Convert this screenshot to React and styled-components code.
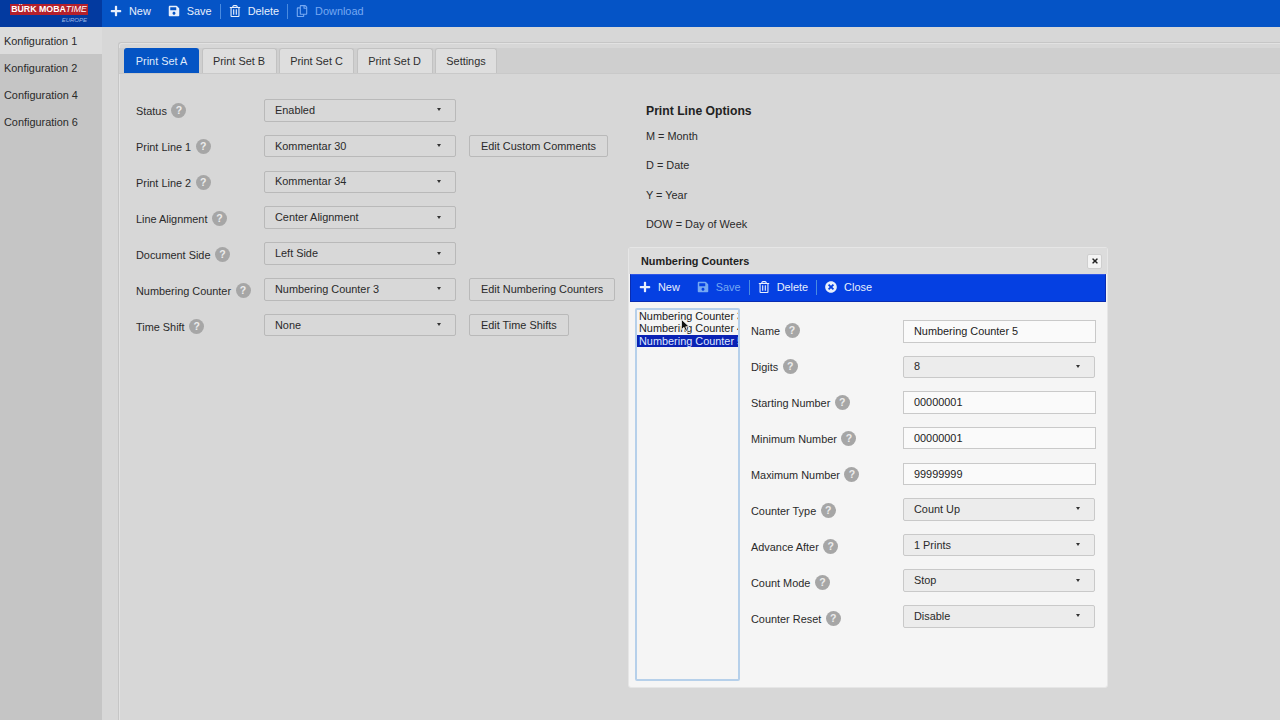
import React from 'react';
import styled, { createGlobalStyle } from 'styled-components';
import { FaPlus, FaSave, FaRegTrashAlt, FaRegCopy, FaTimesCircle, FaTimes } from 'react-icons/fa';

const GlobalStyle = createGlobalStyle`
  html, body { margin: 0; padding: 0; height: 100%; overflow: hidden; }
  body { background: #d7d7d7; font-family: "Liberation Sans", Arial, sans-serif; font-size: 10.9px; color: #2a2a2a; }
`;

const Page = styled.div`
  position: relative;
  width: 1280px;
  height: 720px;
  display: flex;
  flex-direction: column;
  overflow: hidden;
`;

const TopBar = styled.header`
  height: 27px;
  flex: none;
  display: flex;
  background: #0554c6;
`;

const Logo = styled.div`
  width: 102px;
  display: flex;
  flex-direction: column;
  padding: 4px 0 0 10px;
  box-sizing: border-box;
  background: #033aa0;
`;

const LogoMark = styled.div`
  width: 78px;
  height: 11px;
  line-height: 11px;
  background: #b4202c;
  color: #fff;
  font-size: 8.8px;
  font-weight: bold;
  text-align: center;
  white-space: nowrap;
  span { font-weight: normal; font-style: italic; }
`;

const LogoSub = styled.div`
  width: 77px;
  margin-top: 1px;
  text-align: right;
  color: #9db8e6;
  font-size: 6px;
  font-style: italic;
  line-height: 9px;
`;

const Toolbar = styled.div`
  display: flex;
  align-items: center;
  height: 22px;
  padding-left: 8px;
`;

const ModalToolbar = styled(Toolbar)`
  height: 28px;
  flex: none;
  box-sizing: border-box;
  padding-bottom: 2px;
  border: 1px solid #0a2cb0;
  border-top-color: #2f55e6;
  background: #0540e2;
`;

const ToolButton = styled.div`
  display: flex;
  align-items: center;
  gap: 7px;
  margin-right: ${p => p.$gap}px;
  color: ${p => (p.$off ? '#75a8f2' : '#e8effc')};
  white-space: nowrap;
  svg { width: 12px; height: 12px; flex: none; }
`;

const ToolSep = styled.div`
  width: 1px;
  height: 15px;
  margin-right: 8px;
  background: #4a8be0;
`;

const Main = styled.div`
  flex: 1;
  display: flex;
  min-height: 0;
`;

const Sidebar = styled.nav`
  width: 102px;
  flex: none;
  background: #c5c5c5;
`;

const SideItem = styled.div`
  height: 27px;
  line-height: 28px;
  padding-left: 4px;
  background: ${p => (p.$active ? '#dcdcdc' : 'transparent')};
`;

const Content = styled.main`
  flex: 1;
  padding: 15px 0 0 16px;
`;

const Panel = styled.section`
  height: 100%;
  box-sizing: border-box;
  border: 1px solid #c6c6c6;
  border-right: none;
  border-bottom: none;
  border-radius: 3px 0 0 0;
  box-shadow: inset 1px 1px 0 #e2e2e2;
`;

const TabStrip = styled.div`
  display: flex;
  gap: 2.5px;
  height: 26px;
  box-sizing: border-box;
  margin-top: 5px;
  padding: 0 5px;
  background: #cfcfcf;
  border-bottom: 1px solid #c9c9c9;
`;

const Tab = styled.div`
  width: ${p => p.$w}px;
  text-align: center;
  line-height: 25px;
  box-sizing: border-box;
  border: 1px solid ${p => (p.$active ? '#0454c4' : '#c2c2c2')};
  border-bottom: none;
  border-radius: 3px 3px 0 0;
  background: ${p => (p.$active ? '#0454c4' : '#dedede')};
  color: ${p => (p.$active ? '#dfe9fb' : '#2e2e2e')};
`;

const PanelBody = styled.div`
  display: flex;
  padding: 25px 0 0 17px;
`;

const FormColumns = styled.div`
  display: flex;
  flex: ${p => (p.$fill ? 1 : 'none')};
  width: ${p => (p.$fill ? 'auto' : '510px')};
`;

const LabelColumn = styled.div`
  width: ${p => p.$w}px;
  flex: none;
  display: flex;
  flex-direction: column;
  gap: 14px;
  padding-top: ${p => p.$top}px;
`;

const ControlColumn = styled.div`
  display: flex;
  flex-direction: column;
  gap: ${p => p.$gap}px;
`;

const ControlRow = styled.div`
  display: flex;
`;

const Label = styled.div`
  height: 22px;
  display: flex;
  align-items: center;
  gap: 4.5px;
  white-space: nowrap;
`;

const Help = styled.span`
  width: 15px;
  height: 15px;
  margin-top: -1px;
  border-radius: 50%;
  background: #a6a6a6;
  color: #ececec;
  font-size: 10.5px;
  font-weight: bold;
  line-height: 15px;
  text-align: center;
`;

const Select = styled.div`
  width: 192px;
  height: 22.5px;
  flex: none;
  box-sizing: border-box;
  display: flex;
  align-items: center;
  justify-content: space-between;
  padding: 0 14px 1px 10px;
  border: 1px solid ${p => (p.$light ? '#c9c9c9' : '#b9b9b9')};
  border-radius: 2px;
  background: ${p => (p.$light ? '#ececec' : '#d8d8d8')};
  &::after {
    content: '';
    border-left: 2.5px solid transparent;
    border-right: 2.5px solid transparent;
    border-top: 3px solid #333;
  }
`;

const EditButton = styled.div`
  height: 22.5px;
  margin-left: 13px;
  padding: 0 11px;
  box-sizing: border-box;
  line-height: 20px;
  white-space: nowrap;
  border: 1px solid #b9b9b9;
  border-radius: 2px;
  background: #d8d8d8;
`;

const Options = styled.aside`
  padding: 4px 0 0 0;
`;

const OptionsTitle = styled.h3`
  margin: 0 0 10px;
  font-size: 12.2px;
  line-height: 16px;
  color: #222;
`;

const OptionLine = styled.p`
  margin: 0 0 15.4px;
  line-height: 14px;
`;

const Modal = styled.div`
  position: absolute;
  left: 628px;
  top: 247px;
  width: 480px;
  height: 441px;
  box-sizing: border-box;
  padding: 0 1px;
  display: flex;
  flex-direction: column;
  background: #f5f5f5;
  border: 1px solid #e6e6e6;
  border-radius: 3px;
`;

const ModalTitle = styled.div`
  height: 26px;
  flex: none;
  display: flex;
  align-items: center;
  justify-content: space-between;
  margin: 0 -1px;
  padding: 0 5px 0 12px;
  background: #dcdcdc;
  font-weight: bold;
  color: #222;
`;

const CloseBox = styled.div`
  width: 13px;
  height: 13px;
  display: flex;
  align-items: center;
  justify-content: center;
  border: 1px solid #cfcfcf;
  border-radius: 2px;
  background: #f4f4f4;
  color: #222;
  svg { width: 8px; height: 8px; }
`;

const ModalBody = styled.div`
  flex: 1;
  display: flex;
  min-height: 0;
  padding: 6px 0 6px 5px;
`;

const CounterList = styled.div`
  width: 105px;
  flex: none;
  box-sizing: border-box;
  border: 2px solid #b6d0ea;
  border-radius: 2px;
  overflow: hidden;
`;

const CounterItem = styled.div`
  height: 12.3px;
  line-height: 12px;
  white-space: nowrap;
  overflow: hidden;
  padding-left: 2px;
  color: ${p => (p.$active ? '#dfe6ff' : '#222')};
  background: ${p => (p.$active ? '#0a22b4' : 'transparent')};
`;

const CounterForm = styled(FormColumns)`
  padding: 12px 0 0 11px;
`;

const TextField = styled.div`
  width: 193px;
  height: 22.5px;
  flex: none;
  box-sizing: border-box;
  line-height: 20px;
  padding-left: 10px;
  border: 1px solid #c9c9c9;
  background: #fafafa;
  color: #222;
`;

const Cursor = styled.svg`
  position: absolute;
  left: 681px;
  top: 319px;
  width: 9px;
  height: 13px;
`;

const settingsRows = [
  ['Status', 'Enabled'],
  ['Print Line 1', 'Kommentar 30', 'Edit Custom Comments'],
  ['Print Line 2', 'Kommentar 34'],
  ['Line Alignment', 'Center Alignment'],
  ['Document Side', 'Left Side'],
  ['Numbering Counter', 'Numbering Counter 3', 'Edit Numbering Counters'],
  ['Time Shift', 'None', 'Edit Time Shifts'],
];

const counterRows = [
  ['Name', 'Numbering Counter 5', 'text'],
  ['Digits', '8'],
  ['Starting Number', '00000001', 'text'],
  ['Minimum Number', '00000001', 'text'],
  ['Maximum Number', '99999999', 'text'],
  ['Counter Type', 'Count Up'],
  ['Advance After', '1 Prints'],
  ['Count Mode', 'Stop'],
  ['Counter Reset', 'Disable'],
];

const tabs = [['Print Set A', 75], ['Print Set B', 75], ['Print Set C', 75], ['Print Set D', 76], ['Settings', 62]];

export default function App() {
  return (
    <Page>
      <GlobalStyle />
      <TopBar>
        <Logo>
          <LogoMark>BÜRK MOBA<span>TIME</span></LogoMark>
          <LogoSub>EUROPE</LogoSub>
        </Logo>
        <Toolbar>
          <ToolButton $gap={17}><FaPlus />New</ToolButton>
          <ToolButton $gap={8}><FaSave />Save</ToolButton>
          <ToolSep />
          <ToolButton $gap={8}><FaRegTrashAlt />Delete</ToolButton>
          <ToolSep />
          <ToolButton $off $gap={0}><FaRegCopy />Download</ToolButton>
        </Toolbar>
      </TopBar>
      <Main>
        <Sidebar>
          <SideItem $active>Konfiguration 1</SideItem>
          <SideItem>Konfiguration 2</SideItem>
          <SideItem>Configuration 4</SideItem>
          <SideItem>Configuration 6</SideItem>
        </Sidebar>
        <Content>
          <Panel>
            <TabStrip>
              {tabs.map(([name, w], i) => <Tab key={name} $w={w} $active={i === 0}>{name}</Tab>)}
            </TabStrip>
            <PanelBody>
              <FormColumns>
                <LabelColumn $w={128} $top={1}>
                  {settingsRows.map(([label]) => <Label key={label}>{label}<Help>?</Help></Label>)}
                </LabelColumn>
                <ControlColumn $gap={13.33}>
                  {settingsRows.map(([label, value, action]) => (
                    <ControlRow key={label}>
                      <Select>{value}</Select>
                      {action && <EditButton>{action}</EditButton>}
                    </ControlRow>
                  ))}
                </ControlColumn>
              </FormColumns>
              <Options>
                <OptionsTitle>Print Line Options</OptionsTitle>
                <OptionLine>M = Month</OptionLine>
                <OptionLine>D = Date</OptionLine>
                <OptionLine>Y = Year</OptionLine>
                <OptionLine>DOW = Day of Week</OptionLine>
              </Options>
            </PanelBody>
          </Panel>
        </Content>
      </Main>
      <Modal>
        <ModalTitle>Numbering Counters<CloseBox><FaTimes /></CloseBox></ModalTitle>
        <ModalToolbar>
          <ToolButton $gap={17}><FaPlus />New</ToolButton>
          <ToolButton $off $gap={8}><FaSave />Save</ToolButton>
          <ToolSep />
          <ToolButton $gap={8}><FaRegTrashAlt />Delete</ToolButton>
          <ToolSep />
          <ToolButton $gap={0}><FaTimesCircle />Close</ToolButton>
        </ModalToolbar>
        <ModalBody>
          <CounterList>
            <CounterItem>Numbering Counter 3</CounterItem>
            <CounterItem>Numbering Counter 4</CounterItem>
            <CounterItem $active>Numbering Counter 5</CounterItem>
          </CounterList>
          <CounterForm $fill>
            <LabelColumn $w={152} $top={0}>
              {counterRows.map(([label]) => <Label key={label}>{label}<Help>?</Help></Label>)}
            </LabelColumn>
            <ControlColumn $gap={13.15}>
              {counterRows.map(([label, value, kind]) => (
                kind === 'text'
                  ? <TextField key={label}>{value}</TextField>
                  : <Select key={label} $light>{value}</Select>
              ))}
            </ControlColumn>
          </CounterForm>
        </ModalBody>
      </Modal>
      <Cursor viewBox="0 0 9 13">
        <path d="M0.5 0.5 L0.5 10.5 L3 8.3 L4.8 12.3 L6.4 11.6 L4.7 7.8 L8 7.6 Z" fill="#111" stroke="#fff" strokeWidth="0.7" />
      </Cursor>
    </Page>
  );
}
